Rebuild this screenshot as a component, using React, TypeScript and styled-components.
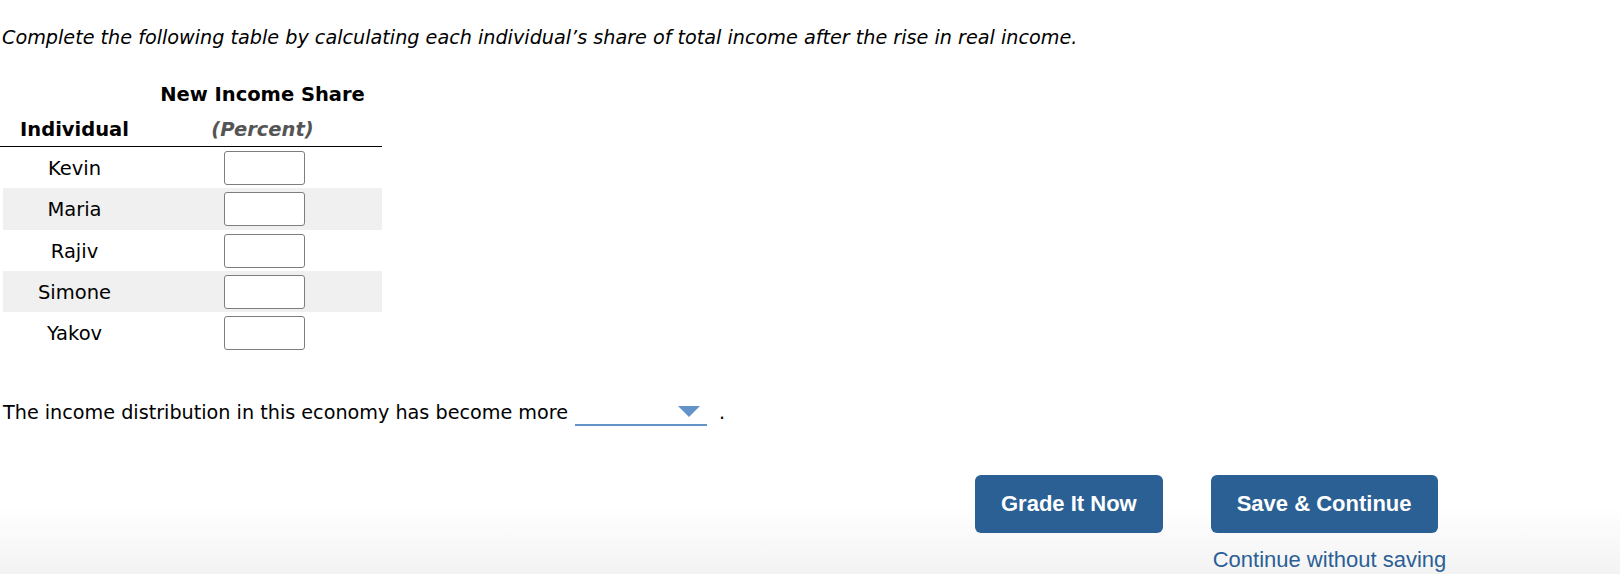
import styled, { createGlobalStyle } from "styled-components"

const GlobalStyle = createGlobalStyle`
  html, body {
    margin: 0;
    padding: 0;
    background: #fff;
  }
  * {
    box-sizing: border-box;
  }
`

const Page = styled.div`
  height: 574px;
  overflow: hidden;
  font-family: "DejaVu Sans", Verdana, sans-serif;
  color: #000;
  background: linear-gradient(to bottom, #fff 0, #fff 505px, #f3f3f3 574px);
`

const Instruction = styled.p`
  margin: 0;
  padding: 28px 0 0 2px;
  font-size: 19.2px;
  line-height: 20px;
  font-style: italic;
  white-space: nowrap;
`

const Table = styled.div`
  width: 382px;
  margin-top: 36px;
`

const HeadRow = styled.div`
  display: grid;
  grid-template-columns: 149px 227px;
  align-items: center;
  font-size: 19.5px;
  line-height: 22px;
  font-weight: 700;
  text-align: center;
  white-space: nowrap;
`

const HeadCell = styled.div<{ $muted?: boolean }>`
  color: ${({ $muted }) => ($muted ? "#555" : "#000")};
  font-style: ${({ $muted }) => ($muted ? "italic" : "normal")};
`

const HeadBottom = styled(HeadRow)`
  margin-top: 13px;
  padding-bottom: 5px;
  border-bottom: 1px solid #000;
`

const BodyRow = styled.div<{ $shaded: boolean }>`
  display: grid;
  grid-template-columns: 146px 227px;
  align-items: center;
  height: 41.3px;
  margin-left: 3px;
  background: ${({ $shaded }) => ($shaded ? "#f0f0f0" : "transparent")};
  font-size: 19.5px;
  text-align: center;
`

const Name = styled.div`
  line-height: 41px;
  padding-top: 1px;
  margin-right: 3px;
`

const AnswerBox = styled.input`
  justify-self: center;
  width: 81px;
  height: 34px;
  margin-left: 3px;
  border: 1px solid #7d7d7d;
  border-radius: 3px;
  background: #fff;
  font-size: 16px;
  padding: 0 4px;
`

const Sentence = styled.div`
  display: flex;
  align-items: flex-end;
  margin-top: 49px;
  padding-left: 3px;
  font-size: 19.2px;
  line-height: 20px;
  white-space: nowrap;
`

const Dropdown = styled.span`
  position: relative;
  display: inline-block;
  width: 132px;
  height: 24px;
  margin-left: 7px;
  margin-bottom: -3px;
  border-bottom: 2px solid #6393c8;
`

const Caret = styled.svg`
  position: absolute;
  right: 7px;
  top: 4px;
`

const Period = styled.span`
  margin-left: 12px;
`

const Actions = styled.div`
  display: flex;
  gap: 48px;
  margin-top: 52px;
  padding-left: 975px;
  font-family: "Liberation Sans", Arial, sans-serif;
`

const Button = styled.button`
  height: 58px;
  padding: 0 26px;
  border: none;
  border-radius: 6px;
  background: #2b6094;
  color: #fff;
  font-family: inherit;
  font-size: 22px;
  font-weight: 700;
  cursor: pointer;
`

const SaveColumn = styled.div`
  display: flex;
  flex-direction: column;
  align-items: flex-start;
`

const Link = styled.a`
  margin-top: 14px;
  margin-left: 2px;
  font-size: 22px;
  line-height: 26px;
  color: #2b5f95;
  text-decoration: none;
  cursor: pointer;
`

const people = ["Kevin", "Maria", "Rajiv", "Simone", "Yakov"]

export default function App() {
  return (
    <Page>
      <GlobalStyle />
      <Instruction>
        Complete the following table by calculating each individual’s share of total income after the rise in real income.
      </Instruction>

      <Table>
        <HeadRow>
          <HeadCell />
          <HeadCell>New Income Share</HeadCell>
        </HeadRow>
        <HeadBottom>
          <HeadCell>Individual</HeadCell>
          <HeadCell $muted>(Percent)</HeadCell>
        </HeadBottom>
        {people.map((name, i) => (
          <BodyRow key={name} $shaded={i % 2 === 1}>
            <Name>{name}</Name>
            <AnswerBox type="text" aria-label={name} />
          </BodyRow>
        ))}
      </Table>

      <Sentence>
        The income distribution in this economy has become more
        <Dropdown>
          <Caret width="22" height="11" viewBox="0 0 22 11">
            <polygon points="0,0 22,0 11,11" fill="#6393c8" />
          </Caret>
        </Dropdown>
        <Period>.</Period>
      </Sentence>

      <Actions>
        <Button>Grade It Now</Button>
        <SaveColumn>
          <Button>Save &amp; Continue</Button>
          <Link>Continue without saving</Link>
        </SaveColumn>
      </Actions>
    </Page>
  )
}
